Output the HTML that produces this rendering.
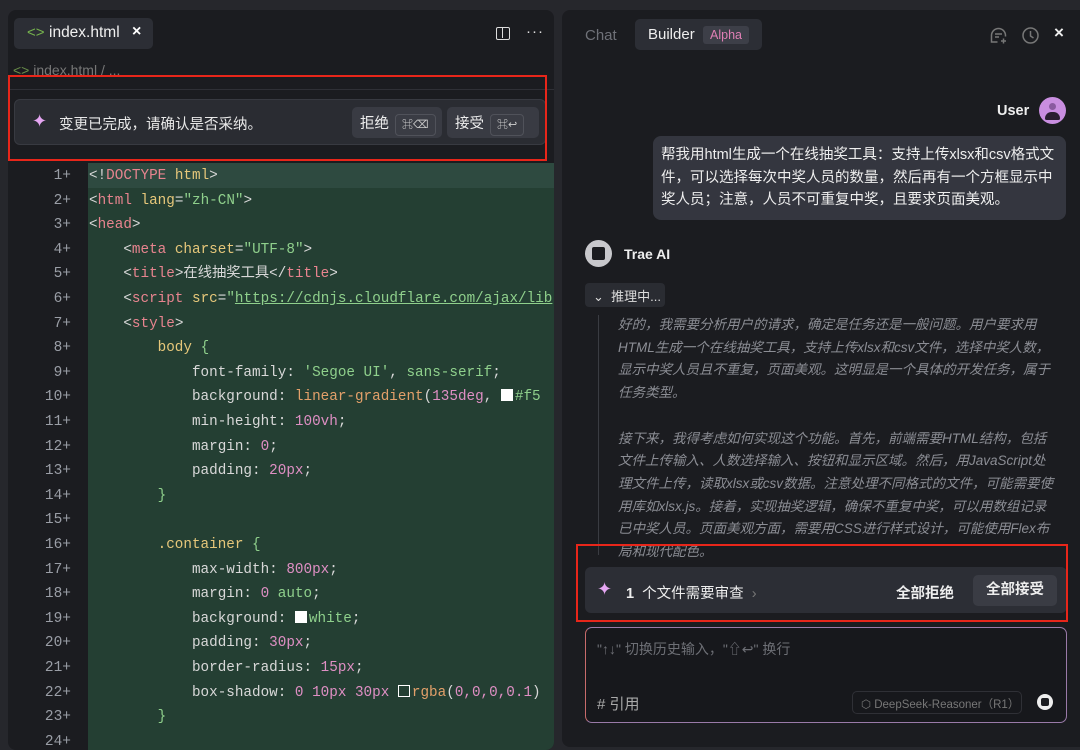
<!DOCTYPE html>
<html><head><meta charset="utf-8"><style>
*{margin:0;padding:0;box-sizing:border-box}
body{width:1080px;height:747px;background:#26272c;font-family:"Liberation Sans","Noto Sans CJK SC",sans-serif;position:relative;overflow:hidden;color:#e6e6e6}
.abs{position:absolute}
.lp{left:8px;top:10px;width:546px;height:740px;background:#1b1c20;border-radius:8px;overflow:hidden}
.rp{left:562px;top:10px;width:518px;height:737px;background:#1b1c20;border-radius:8px 0 0 8px}
.mono{font-family:"Liberation Mono","DejaVu Sans Mono",monospace}
.code{left:80px;top:153px;width:466px;height:600px;background:#243f33}
.ln{position:absolute;left:0;width:63px;text-align:right;color:#9a9ea6;font-size:14.5px;line-height:20px}
.cl{position:absolute;left:81px;font-size:14.3px;white-space:pre;color:#d8d8d8;line-height:20px;height:20px}
.t{color:#e8848f}.a{color:#e6c77a}.s{color:#8fd08c}.k{color:#e8848f}.n{color:#df8fc4}.f{color:#e3a06a}.g{color:#e6c77a}
.box{display:inline-block;width:12px;height:12px;background:#fff;vertical-align:-1px;margin-right:2px}
.red{border:2.5px solid #e8261a}
.rt{color:#8b8d94;font-style:italic;font-size:13.5px;line-height:22.7px}
.kbd{display:inline-block;background:#3a3c44;border:1px solid #50525a;border-radius:4px;padding:0 6px;font-size:11px;height:22px;line-height:20px;margin-left:6px;color:#ccc}
</style></head><body>
<div class="abs lp">
  <div class="abs" style="left:6px;top:8px;width:139px;height:31px;background:#2c2e35;border-radius:5px"></div>
  <div class="abs" style="left:19px;top:14px;font-size:15px;color:#76b34e">&lt;&gt;</div>
  <div class="abs" style="left:41px;top:14px;font-size:15.5px;color:#f0f0f0">index.html</div>
  <div class="abs" style="left:124px;top:13px;font-size:16px;color:#fff;font-weight:bold">×</div>
  <div class="abs" style="left:488px;top:17px;width:14px;height:13px;border:1.6px solid #ddd;border-radius:2px"><div style="position:absolute;left:4.5px;top:0;width:1.6px;height:10px;background:#ddd"></div></div>
  <div class="abs" style="left:518px;top:13px;font-size:15px;color:#ddd;letter-spacing:1px">···</div>
  <div class="abs" style="left:5px;top:52px;font-size:14px;color:#6a8f4a">&lt;&gt; <span style="color:#777">index.html / ...</span></div>
  <div class="abs" style="left:0;top:79px;width:546px;height:1px;background:#2f3036"></div>
  <div class="abs" style="left:6px;top:89px;width:532px;height:46px;background:#2a2c32;border:1px solid #383a41;border-radius:6px"></div>
  <div class="abs" style="left:24px;top:101px;font-size:18px;color:#e5a6f2">✦</div>
  <div class="abs" style="left:51px;top:103px;font-size:14.5px;color:#e8e8e8">变更已完成，请确认是否采纳。</div>
  <div class="abs" style="left:344px;top:97px;width:90px;height:31px;background:#393b43;border-radius:5px;padding:5px 0 0 8px;font-size:14.5px;color:#eee">拒绝<span class="kbd">⌘⌫</span></div>
  <div class="abs" style="left:439px;top:97px;width:92px;height:31px;background:#393b43;border-radius:5px;padding:5px 0 0 8px;font-size:14.5px;color:#eee">接受<span class="kbd">⌘↩</span></div>
  <div class="abs code"></div>
  <div class="abs" style="left:80px;top:153px;width:466px;height:25px;background:#2e4a40"></div>
  <div class="abs mono" style="left:0;top:156px;width:546px;height:600px">
<div class="ln" style="top:0">1+</div><div class="cl" style="top:0">&lt;!<span class="k">DOCTYPE</span> <span class="a">html</span>&gt;</div>
<div class="ln" style="top:24.6px">2+</div><div class="cl" style="top:24.6px">&lt;<span class="t">html</span> <span class="a">lang</span>=<span class="s">"zh-CN"</span>&gt;</div>
<div class="ln" style="top:49.2px">3+</div><div class="cl" style="top:49.2px">&lt;<span class="t">head</span>&gt;</div>
<div class="ln" style="top:73.8px">4+</div><div class="cl" style="top:73.8px">    &lt;<span class="t">meta</span> <span class="a">charset</span>=<span class="s">"UTF-8"</span>&gt;</div>
<div class="ln" style="top:98.4px">5+</div><div class="cl" style="top:98.4px">    &lt;<span class="t">title</span>&gt;在线抽奖工具&lt;/<span class="t">title</span>&gt;</div>
<div class="ln" style="top:123px">6+</div><div class="cl" style="top:123px">    &lt;<span class="t">script</span> <span class="a">src</span>=<span class="s">"<u>https://cdnjs.cloudflare.com/ajax/lib</u></span></div>
<div class="ln" style="top:147.6px">7+</div><div class="cl" style="top:147.6px">    &lt;<span class="t">style</span>&gt;</div>
<div class="ln" style="top:172.2px">8+</div><div class="cl" style="top:172.2px">        <span class="g">body</span> <span class="s">{</span></div>
<div class="ln" style="top:196.8px">9+</div><div class="cl" style="top:196.8px">            font-family: <span class="s">'Segoe UI'</span>, <span class="s">sans-serif</span>;</div>
<div class="ln" style="top:221.4px">10+</div><div class="cl" style="top:221.4px">            background: <span class="f">linear-gradient</span>(<span class="n">135deg</span>, <span class="box"></span><span class="s">#f5</span></div>
<div class="ln" style="top:246px">11+</div><div class="cl" style="top:246px">            min-height: <span class="n">100vh</span>;</div>
<div class="ln" style="top:270.6px">12+</div><div class="cl" style="top:270.6px">            margin: <span class="n">0</span>;</div>
<div class="ln" style="top:295.2px">13+</div><div class="cl" style="top:295.2px">            padding: <span class="n">20px</span>;</div>
<div class="ln" style="top:319.8px">14+</div><div class="cl" style="top:319.8px">        <span class="s">}</span></div>
<div class="ln" style="top:344.4px">15+</div>
<div class="ln" style="top:369px">16+</div><div class="cl" style="top:369px">        <span class="g">.container</span> <span class="s">{</span></div>
<div class="ln" style="top:393.6px">17+</div><div class="cl" style="top:393.6px">            max-width: <span class="n">800px</span>;</div>
<div class="ln" style="top:418.2px">18+</div><div class="cl" style="top:418.2px">            margin: <span class="n">0</span> <span class="s">auto</span>;</div>
<div class="ln" style="top:442.8px">19+</div><div class="cl" style="top:442.8px">            background: <span class="box"></span><span class="s">white</span>;</div>
<div class="ln" style="top:467.4px">20+</div><div class="cl" style="top:467.4px">            padding: <span class="n">30px</span>;</div>
<div class="ln" style="top:492px">21+</div><div class="cl" style="top:492px">            border-radius: <span class="n">15px</span>;</div>
<div class="ln" style="top:516.6px">22+</div><div class="cl" style="top:516.6px">            box-shadow: <span class="n">0 10px 30px</span> <span class="box" style="background:none;border:1.5px solid #fff"></span><span class="f">rgba</span>(<span class="n">0,0,0,0.1</span>)</div>
<div class="ln" style="top:541.2px">23+</div><div class="cl" style="top:541.2px">        <span class="s">}</span></div>
<div class="ln" style="top:565.8px">24+</div>
  </div>
</div>
<div class="abs red" style="left:8px;top:75px;width:539px;height:86px"></div>

<div class="abs rp">
  <div class="abs" style="left:23px;top:17px;font-size:15px;color:#6f7178">Chat</div>
  <div class="abs" style="left:73px;top:9px;width:127px;height:31px;background:#2c2e35;border-radius:5px"></div>
  <div class="abs" style="left:86px;top:16px;font-size:15px;color:#eee">Builder</div>
  <div class="abs" style="left:141px;top:16px;width:46px;height:18px;background:#3d3f48;border-radius:3px;font-size:12.5px;color:#e07fb5;text-align:center;line-height:18px">Alpha</div>
  <svg class="abs" style="left:427px;top:16px" width="19" height="19" viewBox="0 0 19 19" fill="none" stroke="#777" stroke-width="1.5"><path d="M9.5 2.5a7 7 0 0 0-7 7V16h6"/><path d="M9.5 2.5a7 7 0 0 1 7 7v1"/><path d="M6 8h7M6 11h4M12 15h5M14.5 12.5v5"/></svg>
  <svg class="abs" style="left:459px;top:16px" width="19" height="19" viewBox="0 0 19 19" fill="none" stroke="#777" stroke-width="1.5"><circle cx="9.5" cy="9.5" r="7.5"/><path d="M9.5 5v5l3 2"/></svg>
  <div class="abs" style="left:492px;top:13px;font-size:17px;color:#eee;font-weight:bold">×</div>
  <div class="abs" style="left:435px;top:93px;font-size:14.5px;color:#eee;font-weight:bold">User</div>
  <div class="abs" style="left:477px;top:87px;width:27px;height:27px;border-radius:50%;background:#c98ee0;overflow:hidden"><div style="position:absolute;left:10px;top:6px;width:7px;height:7px;border-radius:50%;background:#8a5aa0"></div><div style="position:absolute;left:6px;top:15px;width:15px;height:8px;border-radius:8px 8px 2px 2px;background:#2a1f30"></div></div>
  <div class="abs" style="left:91px;top:126px;width:413px;height:84px;background:#34363f;border-radius:8px;padding:8px 8px;font-size:14.5px;line-height:22.5px;color:#eee">帮我用html生成一个在线抽奖工具：支持上传xlsx和csv格式文件，可以选择每次中奖人员的数量，然后再有一个方框显示中奖人员；注意，人员不可重复中奖，且要求页面美观。</div>
  <div class="abs" style="left:23px;top:230px;width:27px;height:27px;border-radius:50%;background:#c8c8cc"><div style="position:absolute;left:7px;top:7px;width:13px;height:13px;background:#1b1c20;border-radius:2px"></div></div>
  <div class="abs" style="left:62px;top:236px;font-size:14px;color:#eee;font-weight:bold">Trae AI</div>
  <div class="abs" style="left:23px;top:273px;width:80px;height:24px;background:#2a2c32;border-radius:4px;font-size:13px;color:#ddd;padding:3px 0 0 8px">⌄ &nbsp;推理中...</div>
  <div class="abs" style="left:36px;top:305px;width:1px;height:240px;background:#3a3c42"></div>
  <div class="abs rt" style="left:56px;top:304px;width:440px">好的，我需要分析用户的请求，确定是任务还是一般问题。用户要求用HTML生成一个在线抽奖工具，支持上传xlsx和csv文件，选择中奖人数，显示中奖人员且不重复，页面美观。这明显是一个具体的开发任务，属于任务类型。<br><br>接下来，我得考虑如何实现这个功能。首先，前端需要HTML结构，包括文件上传输入、人数选择输入、按钮和显示区域。然后，用JavaScript处理文件上传，读取xlsx或csv数据。注意处理不同格式的文件，可能需要使用库如xlsx.js。接着，实现抽奖逻辑，确保不重复中奖，可以用数组记录已中奖人员。页面美观方面，需要用CSS进行样式设计，可能使用Flex布局和现代配色。</div>
  <div class="abs" style="left:23px;top:557px;width:482px;height:46px;background:#2c2e35;border-radius:6px"></div>
  <div class="abs" style="left:35px;top:569px;font-size:18px;color:#e5a6f2">✦</div>
  <div class="abs" style="left:64px;top:572px;font-size:14.5px;color:#eee"><b>1</b>&nbsp; 个文件需要审查 <span style="color:#777">&nbsp;›</span></div>
  <div class="abs" style="left:334px;top:572px;font-size:14.5px;color:#eee;font-weight:bold">全部拒绝</div>
  <div class="abs" style="left:411px;top:565px;width:84px;height:31px;background:#3a3c44;border-radius:5px;font-size:14.5px;color:#eee;font-weight:bold;text-align:center;line-height:31px">全部接受</div>
  <div class="abs" style="left:23px;top:617px;width:482px;height:96px;border:1.5px solid #9a7aa8;border-left-color:#c86b6b;border-radius:7px;background:#17181c"></div>
  <div class="abs" style="left:35px;top:629px;font-size:14px;color:#6d6f75">"↑↓" 切换历史输入，"⇧↩" 换行</div>
  <div class="abs" style="left:35px;top:683px;font-size:15px;color:#aaa"># 引用</div>
  <div class="abs" style="left:290px;top:681px;width:170px;height:23px;border:1px solid #2f3036;border-radius:5px;font-size:11.5px;color:#777;padding:4px 0 0 8px">⬡ DeepSeek-Reasoner（R1）</div>
  <div class="abs" style="left:475px;top:684px;width:16px;height:16px;border-radius:50%;background:#eee"><div style="position:absolute;left:4px;top:4px;width:8px;height:8px;background:#1b1c20;border-radius:2px"></div></div>
</div>
<div class="abs red" style="left:576px;top:544px;width:492px;height:78px"></div>
</body></html>
